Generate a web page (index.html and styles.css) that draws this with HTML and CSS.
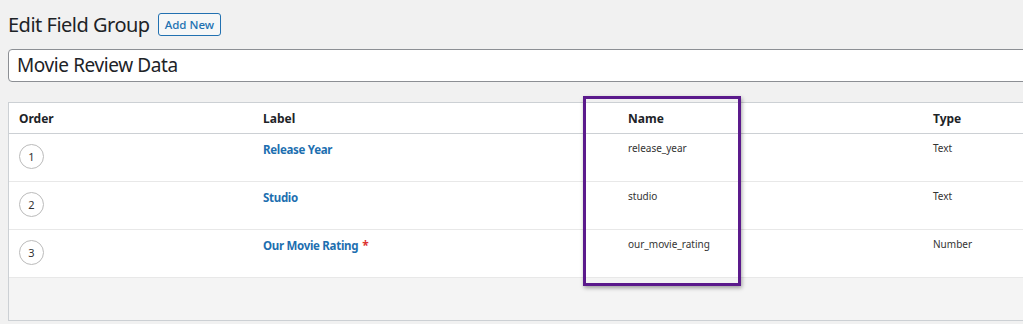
FILE: index.html
```html
<!DOCTYPE html>
<html lang="en">
<head>
  <meta charset="UTF-8" />
  <meta name="viewport" content="width=device-width, initial-scale=1.0" />
  <title>Edit Field Group</title>
  <link rel="stylesheet" href="styles.css">
</head>
<body>
  <div class="wrap">
    <div class="page-title">
      <h1>Edit Field Group</h1>
      <a href="#" class="add-new">Add New</a>
    </div>
    <div class="title-input">Movie Review Data</div>

    <div class="fields-panel">
      <div class="field-row field-head">
        <div>Order</div>
        <div>Label</div>
        <div>Name</div>
        <div>Type</div>
      </div>
      <div class="field-row">
        <div><span class="order-badge">1</span></div>
        <div><a href="#" class="field-label">Release Year</a></div>
        <div class="field-name">release_year</div>
        <div class="field-type">Text</div>
      </div>
      <div class="field-row">
        <div><span class="order-badge">2</span></div>
        <div><a href="#" class="field-label">Studio</a></div>
        <div class="field-name">studio</div>
        <div class="field-type">Text</div>
      </div>
      <div class="field-row">
        <div><span class="order-badge">3</span></div>
        <div><a href="#" class="field-label">Our Movie Rating</a> <span class="required">*</span></div>
        <div class="field-name">our_movie_rating</div>
        <div class="field-type">Number</div>
      </div>
      <div class="panel-footer"></div>

      <div class="highlight"></div>
    </div>
  </div>
</body>
</html>
```

FILE: styles.css
```css
body { margin: 0; background: #f1f1f1; color: #1d2327; font-family: 'Noto Sans', 'Open Sans', Arial, sans-serif; overflow: hidden; }
.wrap { width: 1040px; padding: 9px 0 0 8px; }

.page-title { display: flex; align-items: center; gap: 8px; height: 31px; }
.page-title h1 { margin: 0; font-size: 20px; font-weight: 400; color: #1d2327; letter-spacing: -0.5px; }
.add-new { display: inline-block; border: 1px solid #2271b1; border-radius: 3px; color: #2271b1; background: #f6f7f7; text-decoration: none; font-size: 11.5px; font-weight: 500; line-height: 21px; padding: 0 6px; }

.title-input { margin-top: 9px; height: 33px; box-sizing: border-box; border: 1px solid #8c8f94; border-radius: 4px; background: #fff; font-size: 19px; letter-spacing: -0.4px; line-height: 31px; padding: 0 8px; color: #1d2327; }

.fields-panel { position: relative; margin-top: 20px; background: #fff; border: 1px solid #ccd0d4; }
.field-row { display: grid; grid-template-columns: 244px 365px 305px 1fr; height: 48px; border-bottom: 1px solid #e8e8e8; box-sizing: border-box; }
.field-row > div { padding: 3px 10px 0; }
.field-row:nth-last-of-type(2) { border-bottom-color: #dcdcdc; }
.field-head { height: 31px; border-bottom-color: #ccd0d4; font-size: 12px; font-weight: 700; color: #1d2327; }
.field-head > div { padding-top: 7px; }

.order-badge { display: flex; align-items: center; justify-content: center; width: 25px; height: 25px; margin-top: 7px; box-sizing: border-box; border: 1px solid #bbb; border-radius: 50%; font-size: 11px; color: #333; }
.field-label { font-size: 11.5px; font-weight: 700; letter-spacing: -0.3px; color: #1d6fb0; text-decoration: none; }
.required { color: #dc3232; font-weight: 700; font-size: 12px; }
.field-name, .field-type { font-size: 10px; color: #333; padding-top: 7px !important; }

.panel-footer { height: 42px; background: #f4f4f4; }

.highlight { position: absolute; left: 574px; top: -7px; width: 158px; height: 190px; box-sizing: border-box; border: 3px solid #5b1a8c; box-shadow: 1px 2px 4px rgba(0,0,0,0.35); pointer-events: none; }
```
